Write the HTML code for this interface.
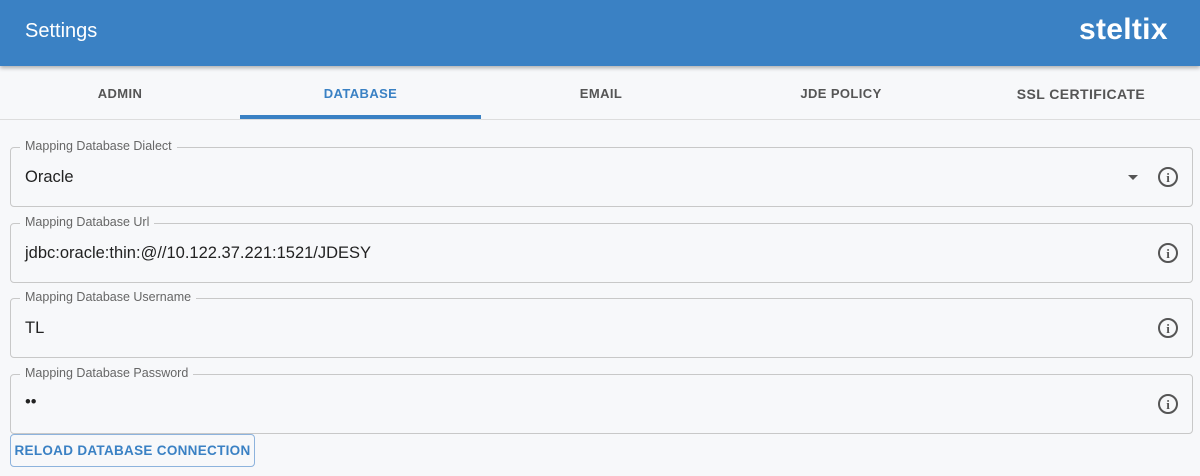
<!DOCTYPE html>
<html><head><style>
body{margin:0;width:1200px;height:476px;background:#f7f8fa;font-family:"Liberation Sans",Arial,sans-serif;overflow:hidden;position:relative}
.hdr{position:absolute;left:0;top:0;width:1200px;height:66px;background:#3a81c4;box-shadow:0 2px 4px rgba(0,0,0,.3)}
.hdr .t{position:absolute;left:25px;top:20px;color:#fff;font-size:20px}
.logo{position:absolute;left:1079px;top:13px;color:#fff;font-size:30px;font-weight:bold;letter-spacing:0.3px}
.tab{position:absolute;top:86px;font-size:13px;color:#555;text-align:center;letter-spacing:.4px;font-weight:600}
.ind{position:absolute;left:240px;top:115px;width:241px;height:4px;background:#3a81c4}
.div{position:absolute;left:0;top:119px;width:1200px;height:1px;background:#ddd}
.f{position:absolute;left:10px;width:1181px;border:1px solid #c8c8c8;border-radius:4px}
.f .l{position:absolute;left:9px;top:-9px;padding:0 5px;background:#f7f8fa;font-size:12.5px;color:#666}
.f .v{position:absolute;left:14px;font-size:16.5px;color:#222}
.i{position:absolute;right:14px;width:16px;height:16px;border:2px solid #555;border-radius:50%;font-size:13px;font-weight:bold;color:#555;text-align:center;line-height:17px;font-family:"Liberation Serif",serif}
.btn{position:absolute;left:10px;top:434px;width:243px;height:31px;border:1px solid #8db3dd;border-radius:4px;color:#3a81c4;font-size:13.5px;text-align:center;line-height:31px;letter-spacing:.3px;font-weight:600}
</style></head><body>
<div class="hdr"><div class="t">Settings</div><div class="logo">steltix</div></div>
<div class="tab" style="left:0;width:240px">ADMIN</div>
<div class="tab" style="left:240px;width:241px;color:#3a81c4">DATABASE</div>
<div class="tab" style="left:481px;width:240px">EMAIL</div>
<div class="tab" style="left:721px;width:240px">JDE POLICY</div>
<div class="tab" style="left:961px;width:240px;font-size:14px">SSL CERTIFICATE</div>
<div class="ind"></div><div class="div"></div>
<div class="f" style="top:147px;height:58px"><span class="l">Mapping Database Dialect</span><span class="v" style="top:20px">Oracle</span><span style="position:absolute;right:54px;top:27px;border-left:5px solid transparent;border-right:5px solid transparent;border-top:5px solid #555"></span><span class="i" style="top:19px">i</span></div>
<div class="f" style="top:223px;height:58px"><span class="l">Mapping Database Url</span><span class="v" style="top:20px">jdbc:oracle:thin:@//10.122.37.221:1521/JDESY</span><span class="i" style="top:19px">i</span></div>
<div class="f" style="top:298px;height:58px"><span class="l">Mapping Database Username</span><span class="v" style="top:20px">TL</span><span class="i" style="top:19px">i</span></div>
<div class="f" style="top:374px;height:58px"><span class="l">Mapping Database Password</span><span class="v" style="top:18px">••</span><span class="i" style="top:19px">i</span></div>
<div class="btn">RELOAD DATABASE CONNECTION</div>
</body></html>
